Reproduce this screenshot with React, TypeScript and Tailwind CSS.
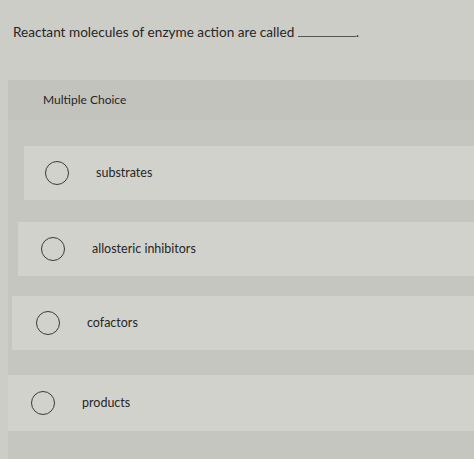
const OPTIONS = [
  { label: 'substrates', card: 'ml-[16px] mt-[26px]', circle: 'ml-[21px]' },
  { label: 'allosteric inhibitors', card: 'ml-[10px] mt-[22px]', circle: 'ml-[23px]' },
  { label: 'cofactors', card: 'ml-[4px] mt-[20px]', circle: 'ml-[24px]' },
  { label: 'products', card: 'ml-0 mt-[25px] h-[56px]', circle: 'ml-[23px]' },
]

export default function App() {
  return (
    <div className="w-full h-[459px] overflow-hidden bg-[#cdcdc8] font-['Lato','Open_Sans',sans-serif] text-[#262626]">
      {/* Question */}
      <div className="pl-[13px] pt-[24px] h-[80px] text-[13.6px] leading-[16px]">
        Reactant molecules of enzyme action are called{' '}
        <span className="inline-block w-[58px] border-b border-[#555] align-baseline" />.
      </div>

      {/* Panel */}
      <div className="ml-[8px] h-[379px] bg-[#c6c6c1]">
        <div className="h-[40px] flex items-center pl-[35px] text-[12px] bg-[#c3c3be]">Multiple Choice</div>
        <div className="flex flex-col">
          {OPTIONS.map((o) => (
            <div key={o.label} className={`${o.card} h-[54px] flex items-center bg-[#d2d2cd]`}>
              <span className={`${o.circle} w-[24px] h-[24px] rounded-full border border-[#3a3a3a] shrink-0`} />
              <span className="ml-[27px] text-[12.5px]">{o.label}</span>
            </div>
          ))}
        </div>
      </div>
    </div>
  )
}
